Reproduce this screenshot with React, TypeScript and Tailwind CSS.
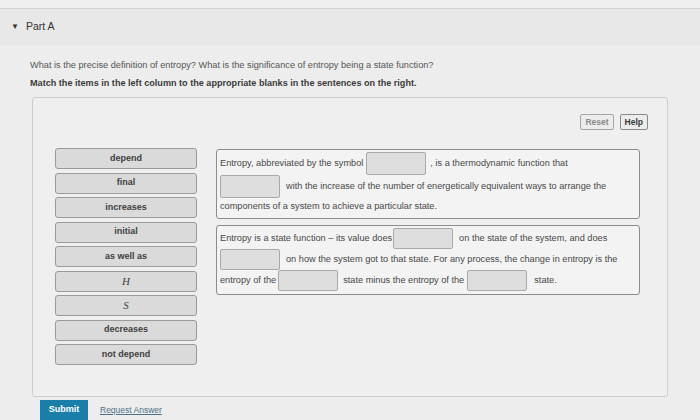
const items = ['depend', 'final', 'increases', 'initial', 'as well as', 'H', 'S', 'decreases', 'not depend'];

function Blank({ className = '' }: { className?: string }) {
  return <span className={`inline-block w-[60px] h-full shrink-0 bg-[#dedede] border border-[#a9a9a9] rounded-[2px] ${className}`} />;
}

function Item({ label }: { label: string }) {
  const symbol = label === 'H' || label === 'S';
  return (
    <div className="h-[21px] w-[142px] flex items-center justify-center bg-[#dadada] border border-[#9a9a9a] rounded-[3px] text-[#404040]">
      {symbol ? (
        <span className="italic text-[11px]" style={{ fontFamily: '"Liberation Serif", serif' }}>{label}</span>
      ) : (
        <span className="font-bold text-[9px]">{label}</span>
      )}
    </div>
  );
}

export default function App() {
  return (
    <div className="w-[700px] h-[420px] overflow-hidden bg-[#ededed] text-[#444]" style={{ fontFamily: '"Liberation Sans", Arial, sans-serif' }}>
      <div className="h-[9px] bg-[#efefef] border-b border-[#d2d2d2]" />

      {/* Part header */}
      <div className="h-[36px] flex items-center pl-[11px] bg-[#e8e8e8]">
        <span className="text-[8px] text-[#333]">▼</span>
        <span className="ml-[7px] text-[10.5px] text-[#333]">Part A</span>
      </div>

      <div className="pl-[30px] pt-[15px]">
        <p className="text-[9.2px] text-[#555] leading-[11px]">
          What is the precise definition of entropy? What is the significance of entropy being a state function?
        </p>
        <p className="mt-[7px] text-[9.1px] font-bold text-[#3a3a3a] leading-[11px]">
          Match the items in the left column to the appropriate blanks in the sentences on the right.
        </p>
      </div>

      {/* Matching area */}
      <div className="ml-[32px] mt-[8px] w-[636px] h-[300px] bg-[#efefef] border border-[#cdcdcd] rounded-[3px]">
        <div className="flex justify-end gap-[6px] pt-[16px] pr-[19px]">
          <button className="h-[16px] px-[4px] border border-[#a5a5a5] rounded-[2px] bg-[#ececec] text-[8.5px] font-bold text-[#8a8a8a]">Reset</button>
          <button className="h-[16px] px-[4px] border border-[#8a8a8a] rounded-[2px] bg-[#ececec] text-[8.5px] font-bold text-[#3a3a3a]">Help</button>
        </div>

        <div className="flex gap-[19px] pl-[22px] mt-[18px]">
          <div className="flex flex-col gap-[3.5px]">
            {items.map((it) => (
              <Item key={it} label={it} />
            ))}
          </div>

          <div className="flex flex-col gap-[6px] pt-[1px]">
            <div className="w-[424px] bg-[#f3f3f3] border border-[#8c8c8c] rounded-[3px] pl-[3px] pt-[2px] pb-[3px] text-[9.2px] text-[#474747]">
              <div className="h-[23px] flex items-center">
                <span>Entropy, abbreviated by the symbol</span>
                <Blank className="ml-[3px] mr-[4px]" />
                <span>, is a thermodynamic function that</span>
              </div>
              <div className="h-[23px] flex items-center">
                <Blank className="mr-[6px]" />
                <span>with the increase of the number of energetically equivalent ways to arrange the</span>
              </div>
              <div className="h-[17px] flex items-center">
                <span>components of a system to achieve a particular state.</span>
              </div>
            </div>

            <div className="w-[424px] bg-[#f3f3f3] border border-[#8c8c8c] rounded-[3px] pl-[3px] pt-[2px] pb-[3px] text-[9.2px] text-[#474747]">
              <div className="h-[21px] flex items-center">
                <span>Entropy is a state function – its value does</span>
                <Blank className="ml-[1px] mr-[6px]" />
                <span>on the state of the system, and does</span>
              </div>
              <div className="h-[21px] flex items-center">
                <Blank className="mr-[6px]" />
                <span>on how the system got to that state. For any process, the change in entropy is the</span>
              </div>
              <div className="h-[21px] flex items-center">
                <span>entropy of the</span>
                <Blank className="ml-[2px] mr-[5px]" />
                <span>state minus the entropy of the</span>
                <Blank className="ml-[3px] mr-[7px]" />
                <span>state.</span>
              </div>
            </div>
          </div>
        </div>
      </div>

      <div className="flex items-center pl-[40px] mt-[3px]">
        <button className="h-[20px] w-[48px] bg-[#1b7ea8] text-white text-[9px] font-bold">Submit</button>
        <span className="ml-[12px] text-[8.5px] text-[#4d6f88] underline">Request Answer</span>
      </div>
    </div>
  );
}
